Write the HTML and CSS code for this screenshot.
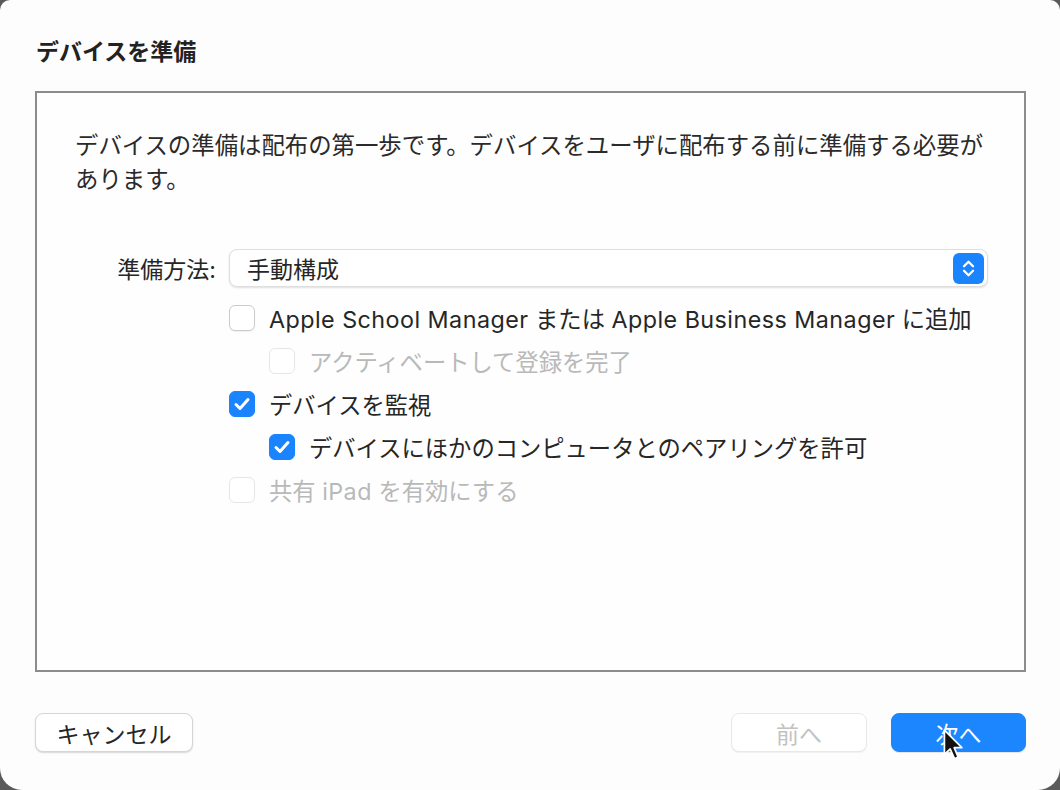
FILE: index.html
```html
<!DOCTYPE html>
<html lang="ja">
<head>
<meta charset="utf-8">
<title>デバイスを準備</title>
<link rel="stylesheet" href="styles.css">
</head>
<body>
<div class="window">
  <h1 class="title">デバイスを準備</h1>
  <div class="panel">
    <p class="desc">デバイスの準備は配布の第一歩です。デバイスをユーザに配布する前に準備する必要が<br>あります。</p>
    <div class="form">
      <div class="field">
        <span class="label">準備方法:</span>
        <div class="popup">
          <span class="popup-text">手動構成</span>
          <span class="stepper">
            <svg width="31" height="31" viewBox="0 0 31 31"><path d="M11 13.2 L15.5 8.7 L20 13.2 M11 17.8 L15.5 22.3 L20 17.8" fill="none" stroke="#fff" stroke-width="2.3" stroke-linecap="round" stroke-linejoin="round"/></svg>
          </span>
        </div>
      </div>
      <div class="options">
        <label class="opt"><span class="box"></span><span class="opt-text"><span class="lat">Apple School Manager</span> または <span class="lat">Apple Business Manager</span> に追加</span></label>
        <label class="opt sub disabled"><span class="box"></span><span class="opt-text">アクティベートして登録を完了</span></label>
        <label class="opt"><span class="box checked"><svg width="26" height="26" viewBox="0 0 26 26"><path d="M7 13.5 L11 17.5 L19 8.5" fill="none" stroke="#fff" stroke-width="3" stroke-linecap="round" stroke-linejoin="round"/></svg></span><span class="opt-text">デバイスを監視</span></label>
        <label class="opt sub"><span class="box checked"><svg width="26" height="26" viewBox="0 0 26 26"><path d="M7 13.5 L11 17.5 L19 8.5" fill="none" stroke="#fff" stroke-width="3" stroke-linecap="round" stroke-linejoin="round"/></svg></span><span class="opt-text">デバイスにほかのコンピュータとのペアリングを許可</span></label>
        <label class="opt disabled"><span class="box"></span><span class="opt-text">共有 <span class="lat">iPad</span> を有効にする</span></label>
      </div>
    </div>
  </div>
  <div class="buttons">
    <button class="btn">キャンセル</button>
    <div class="nav">
      <button class="btn btn-disabled">前へ</button>
      <button class="btn btn-primary">次へ</button>
    </div>
  </div>
  <svg class="cursor" width="26" height="36" viewBox="0 0 24 34"><path d="M2 2 L2 25 L7.5 19.8 L11.5 29 L15 27.5 L11.2 18.6 L18.5 18.6 Z" fill="#111" stroke="#fff" stroke-width="1.6" stroke-linejoin="round"/></svg>
</div>
</body>
</html>
```
FILE: styles.css
```css
* { box-sizing: border-box; }
html, body { margin: 0; padding: 0; }
body {
  width: 1060px;
  height: 790px;
  background: #5a5a5a;
  overflow: hidden;
  font-family: Inter, "Noto Sans CJK JP", sans-serif;
  color: #262626;
}
.window {
  position: relative;
  width: 1060px;
  height: 790px;
  background: #fdfdfd;
  border-radius: 10px 10px 22px 22px;
  padding: 37px 34px 0 35px;
}
.title {
  margin: 0;
  font-size: 23px;
  line-height: 30px;
  font-weight: 700;
  color: #222;
  padding-left: 1px;
}
.panel {
  margin-top: 24px;
  height: 581px;
  border: 2px solid #8c8c8c;
  background: #fefefe;
  padding: 36px 36px 0 38px;
}
.desc {
  margin: 0;
  font-size: 23.4px;
  line-height: 34px;
  white-space: nowrap;
  color: #2a2a2a;
}
.form {
  margin-top: 52px;
}
.field {
  display: grid;
  grid-template-columns: 141px 1fr;
  column-gap: 13px;
  align-items: center;
}
.label {
  text-align: right;
  font-size: 23px;
}
.popup {
  height: 38px;
  border: 1px solid #dedede;
  border-radius: 8px;
  background: #fff;
  box-shadow: 0 1px 2px rgba(0,0,0,0.12);
  display: flex;
  align-items: center;
  justify-content: space-between;
  padding: 0 3px 0 17px;
}
.popup-text { font-size: 23px; }
.stepper {
  width: 31px;
  height: 31px;
  border-radius: 6px;
  background: #1a84ff;
  display: flex;
}
.options {
  margin-left: 154px;
  margin-top: 10px;
  display: flex;
  flex-direction: column;
}
.opt {
  height: 42.8px;
  display: flex;
  align-items: center;
  gap: 14px;
  font-size: 23.3px;
}
.lat { letter-spacing: 0.02em; }
.opt.sub { padding-left: 40px; }
.box {
  width: 26px;
  height: 26px;
  flex: none;
  border-radius: 6px;
  background: #fff;
  border: 1px solid #cbcbcb;
  box-shadow: 0 1px 1px rgba(0,0,0,0.06);
  display: flex;
}
.box.checked {
  background: #1a84ff;
  border-color: #1a84ff;
  box-shadow: none;
}
.box.checked svg { margin: -1px; }
.opt.disabled .box { border-color: #e6e6e6; box-shadow: none; }
.opt.disabled .opt-text { color: #b9b9b9; }
.buttons {
  margin-top: 41px;
  display: flex;
  justify-content: space-between;
  align-items: center;
}
.nav { display: flex; gap: 24px; }
.btn {
  height: 39px;
  border-radius: 8px;
  border: 1px solid #d6d6d6;
  background: #fff;
  box-shadow: 0 1px 1.5px rgba(0,0,0,0.15);
  font-family: inherit;
  font-size: 23px;
  color: #262626;
  width: 158px;
  padding: 0;
}
.btn-disabled {
  width: 136px;
  color: #c2c2c2;
  border-color: #e8e8e8;
  box-shadow: 0 1px 1px rgba(0,0,0,0.05);
}
.btn-primary {
  width: 135px;
  background: #1c86ff;
  border-color: #1c86ff;
  color: #fff;
  box-shadow: 0 1px 1px rgba(0,0,0,0.1);
}
.cursor {
  position: absolute;
  left: 942px;
  top: 728px;
}
```
